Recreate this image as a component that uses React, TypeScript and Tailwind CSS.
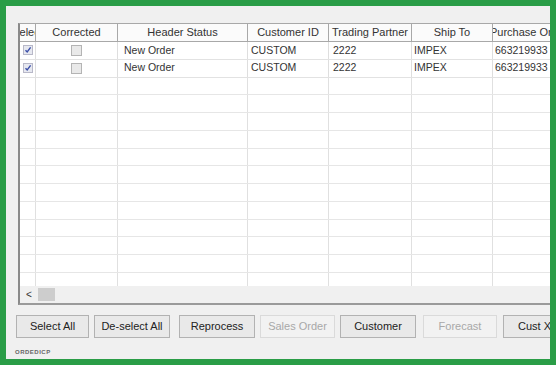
import React from "react";

const cols = [
  { w: 16, label: "Select", pl: 0 },
  { w: 82, label: "Corrected", pl: 0 },
  { w: 130, label: "Header Status", pl: 6 },
  { w: 81, label: "Customer ID", pl: 3 },
  { w: 83, label: "Trading Partner", pl: 4 },
  { w: 81, label: "Ship To", pl: 2 },
  { w: 110, label: "Purchase Order", pl: 2 },
];

const rows = [
  ["", "", "New Order", "CUSTOM", "2222", "IMPEX", "663219933"],
  ["", "", "New Order", "CUSTOM", "2222", "IMPEX", "663219933"],
];

function CheckedBox() {
  return (
    <div className="w-[10px] h-[10px] border border-[#b8b8c8] bg-[#e6e8f0] flex items-center justify-center">
      <svg width="8" height="8" viewBox="0 0 8 8">
        <path d="M1.5 4.2 L3.2 6 L6.6 1.4" fill="none" stroke="#3b4fa8" strokeWidth="1.4" />
      </svg>
    </div>
  );
}

function EmptyBox() {
  return <div className="w-[11px] h-[11px] border border-[#b4b4b4] bg-[#e9e9e9]" />;
}

function Btn({ label, w, ml, disabled }: { label: string; w: number; ml: number; disabled?: boolean }) {
  return (
    <div
      style={{ width: w, marginLeft: ml }}
      className={
        "h-[23px] shrink-0 flex items-center justify-center text-[11px] border whitespace-nowrap " +
        (disabled
          ? "border-[#dadada] bg-[#f2f2f2] text-[#a8a8a8]"
          : "border-[#b2b2b2] bg-[#e9e9e9] text-[#222]")
      }
    >
      {label}
    </div>
  );
}

export default function App() {
  const empty = Array.from({ length: 12 });
  return (
    <div
      className="w-[556px] h-[365px] bg-[#2a9d47] p-[6px]"
      style={{ fontFamily: '"Liberation Sans", Arial, sans-serif' }}
    >
      <div className="w-[544px] h-[353px] bg-[#f0f0f0] overflow-hidden flex flex-col">
        {/* grid */}
        <div className="ml-[12px] mt-[17px] w-[600px] h-[282px] shrink-0 border-l-2 border-t border-b-2 border-l-[#8a8a8a] border-t-[#a8a8a8] border-b-[#9a9a9a] bg-white flex flex-col">
          {/* header */}
          <div className="flex h-[18px] shrink-0 border-b border-[#a8a8a8]">
            {cols.map((c, i) => (
              <div
                key={i}
                style={{ width: c.w }}
                className={
                  "shrink-0 border-r border-[#a8a8a8] overflow-hidden flex items-center text-[11px] text-[#333] whitespace-nowrap bg-[#fbfbfb] " +
                  (i === 6 ? "justify-start" : "justify-center")
                }
              >
                {i === 6 ? <span className="ml-[-3px]">{c.label}</span> : c.label}
              </div>
            ))}
          </div>
          {/* body */}
          <div className="h-[244px] overflow-hidden shrink-0">
            {rows.map((r, ri) => (
              <div key={ri} className="flex h-[17.75px] border-b border-[#e2e2e2]">
                {cols.map((c, i) => (
                  <div
                    key={i}
                    style={{ width: c.w, paddingLeft: c.pl }}
                    className={
                      "shrink-0 border-r border-[#dedede] overflow-hidden flex items-center text-[10.5px] text-[#333] whitespace-nowrap " +
                      (i < 2 ? "justify-center" : "")
                    }
                  >
                    {i === 0 ? <CheckedBox /> : i === 1 ? <EmptyBox /> : r[i]}
                  </div>
                ))}
              </div>
            ))}
            {empty.map((_, ri) => (
              <div key={"e" + ri} className="flex h-[17.75px] border-b border-[#e6e6e6]">
                {cols.map((c, i) => (
                  <div key={i} style={{ width: c.w }} className="shrink-0 border-r border-[#e0e0e0]" />
                ))}
              </div>
            ))}
          </div>
          {/* scrollbar */}
          <div className="flex-1 bg-[#f0f0f0] flex items-center">
            <span className="ml-[6px] text-[10px] text-[#333] leading-none">&lt;</span>
            <div className="ml-[6px] w-[17px] h-[13px] bg-[#cdcdcd]" />
          </div>
        </div>
        {/* buttons */}
        <div className="flex mt-[10px] shrink-0">
          <Btn label="Select All" w={73} ml={10} />
          <Btn label="De-select All" w={76} ml={5} />
          <Btn label="Reprocess" w={76} ml={9} />
          <Btn label="Sales Order" w={75} ml={5} disabled />
          <Btn label="Customer" w={76} ml={5} />
          <Btn label="Forecast" w={74} ml={7} disabled />
          <Btn label="Cust Xref" w={76} ml={6} />
        </div>
        <div className="ml-[9px] mt-[11px] text-[6px] font-bold text-[#666] leading-none tracking-[0.5px]">ORDEDICP</div>
      </div>
    </div>
  );
}
